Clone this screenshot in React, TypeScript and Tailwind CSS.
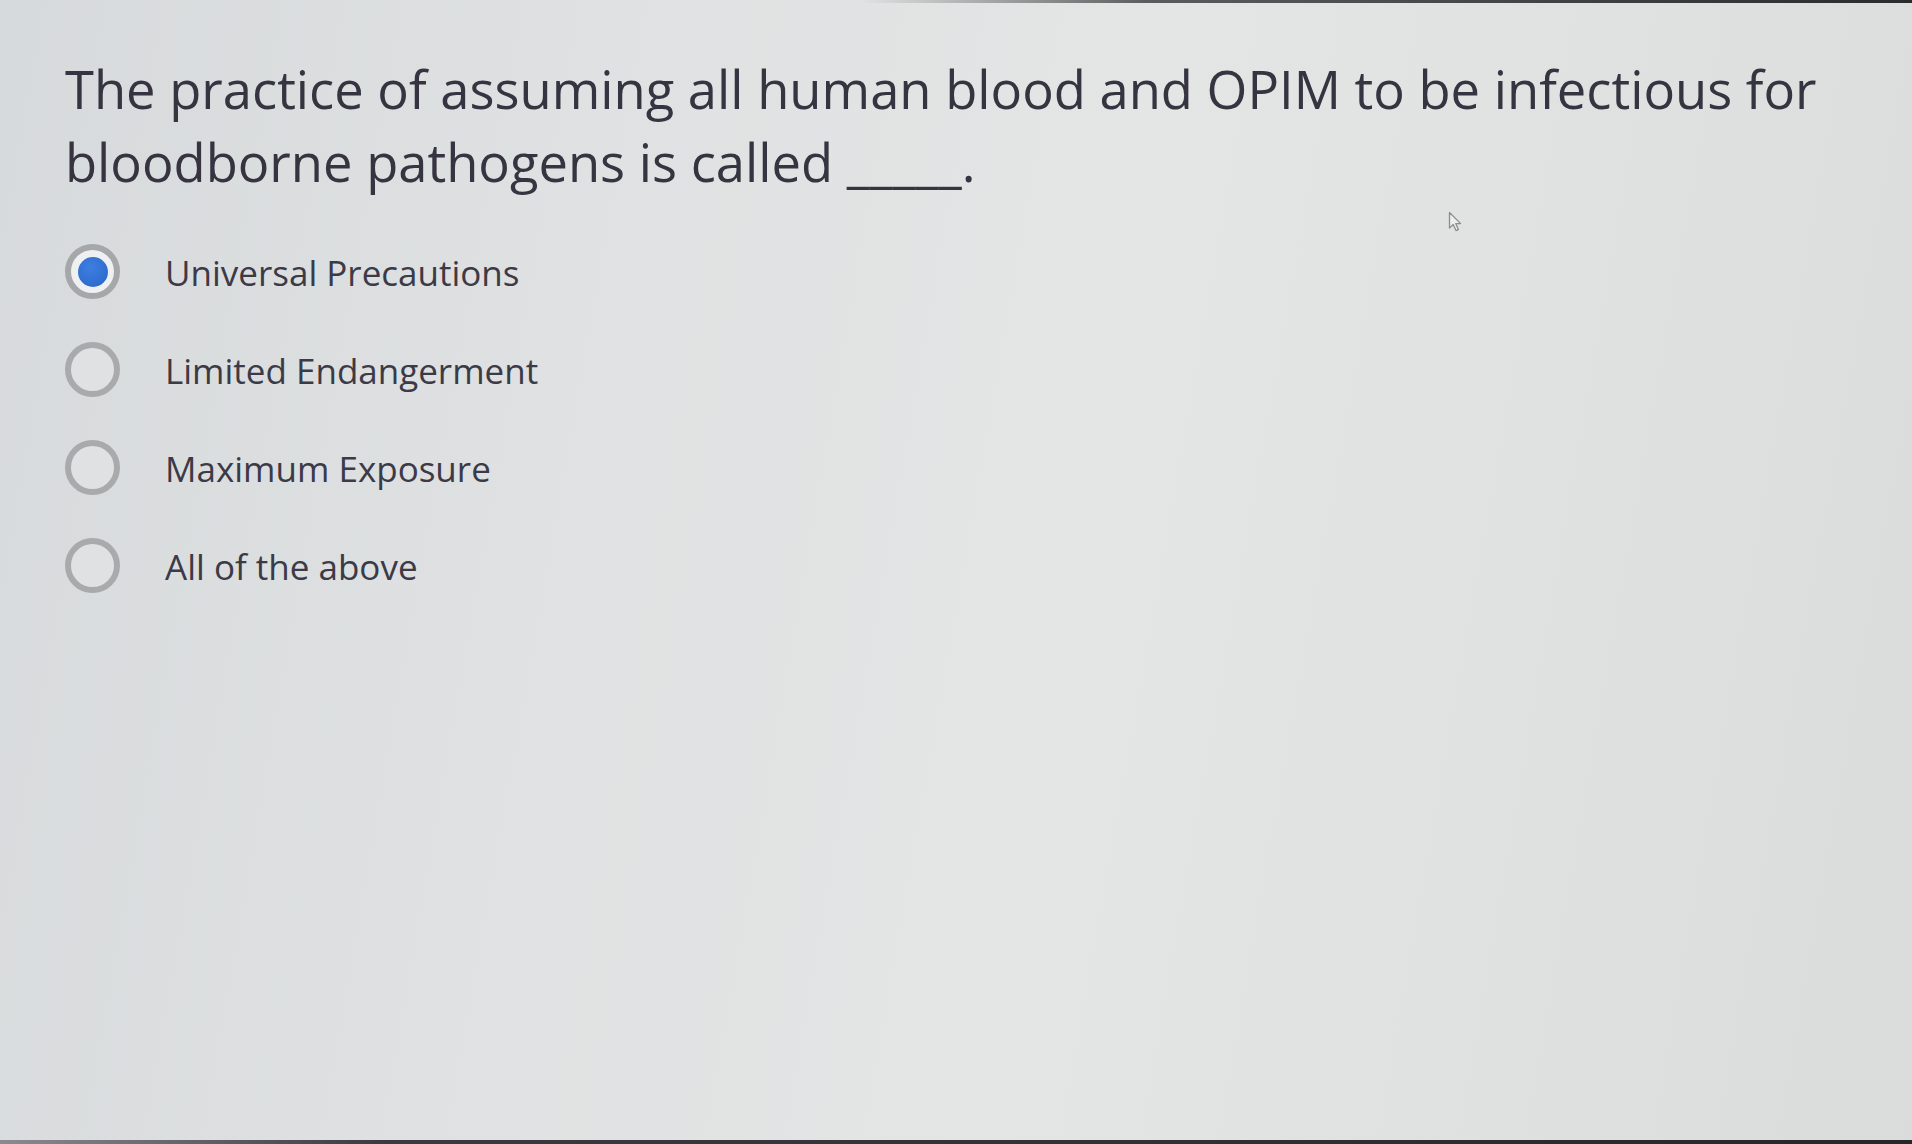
const options = [
  { label: 'Universal Precautions', selected: true },
  { label: 'Limited Endangerment', selected: false },
  { label: 'Maximum Exposure', selected: false },
  { label: 'All of the above', selected: false },
];

function Radio({ selected }: { selected: boolean }) {
  if (selected) {
    return (
      <div className="w-[55px] h-[55px] shrink-0 rounded-full border-[6px] border-[#a6a7a9] bg-[#eff0f1] flex items-center justify-center">
        <div className="w-[30px] h-[30px] rounded-full bg-[radial-gradient(circle_at_40%_35%,#3d7fe0,#2a64c9)]" />
      </div>
    );
  }
  return <div className="w-[55px] h-[55px] shrink-0 rounded-full border-[6px] border-[#a9aaac] bg-[#e0e1e2]" />;
}

function Cursor() {
  return (
    <svg className="absolute left-[1448px] top-[211px]" width="14" height="22" viewBox="0 0 14 22" fill="none">
      <path d="M1.5 1.5 L1.5 17 L5.2 13.4 L8 19.6 L10.4 18.6 L7.7 12.6 L12.6 12.6 Z" fill="#eeeeee" stroke="#8c8d90" strokeWidth="1.3" strokeLinejoin="round" />
    </svg>
  );
}

export default function App() {
  return (
    <div className="relative w-full h-[1144px] flex flex-col overflow-hidden bg-[linear-gradient(100deg,#d7dadc_0%,#dfe1e2_30%,#e4e5e5_55%,#dfe0e0_80%,#dadbdb_100%)] font-['Open_Sans',sans-serif]">
      <div className="h-[3px] shrink-0 bg-[linear-gradient(90deg,transparent_0%,transparent_45%,#5a5b5e_60%,#2a2b2e_100%)]" />
      <div className="flex-1 pt-[49px] pl-[65px] pr-[40px]">
        <h1 className="text-[52.5px] leading-[73px] font-normal text-[#363440]">
          The practice of assuming all human blood and OPIM to be infectious for bloodborne pathogens is called _____.
        </h1>
        <div className="mt-[46px] flex flex-col gap-[43px]">
          {options.map((o) => (
            <label key={o.label} className="flex items-center gap-[45px] h-[55px]">
              <Radio selected={o.selected} />
              <span className="text-[35px] leading-[46px] text-[#3b3a46] pt-[3px]">{o.label}</span>
            </label>
          ))}
        </div>
      </div>
      <div className="h-[4px] shrink-0 bg-[linear-gradient(90deg,#8a8b8e_0%,#3a3b3e_20%,#26272a_100%)]" />
      <Cursor />
    </div>
  );
}
